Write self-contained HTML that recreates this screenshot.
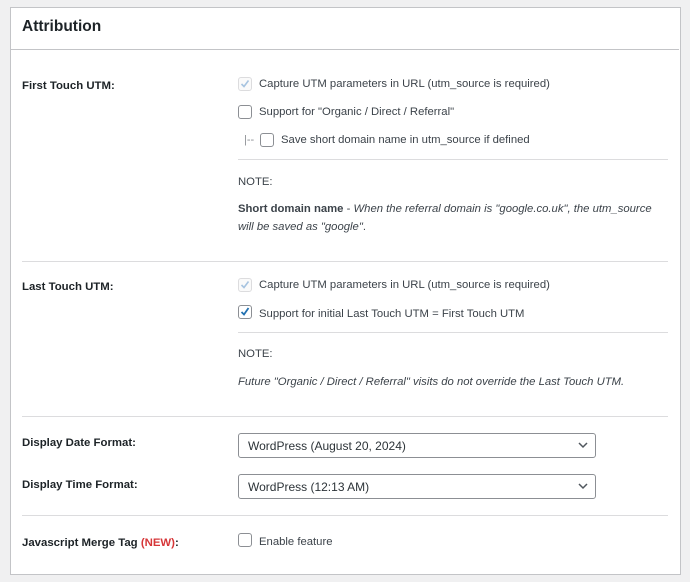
<!DOCTYPE html>
<html><head><style>
body{margin:0;width:690px;height:582px;background:#f0f0f1;font-family:"Liberation Sans",sans-serif;font-size:11.3px;color:#3c434a;position:relative;overflow:hidden}
.panel{position:absolute;left:10px;top:7px;width:669px;height:566px;background:#fff;border:1px solid #c3c4c7}
.a{position:absolute;white-space:nowrap;margin-top:1px}
.lbl{font-weight:bold;color:#1d2327;font-size:11.4px;margin-top:2px}
.cb{position:absolute;width:14px;height:14px;border:1px solid #8c8f94;border-radius:3px;background:#fff;box-sizing:border-box}
.cb.dis{border-color:#dcdcde;background:#fafafa}
.hr{position:absolute;height:1px;background:#dcdcde}
.sel{position:absolute;left:238px;width:358px;height:25px;border:1px solid #8c8f94;border-radius:3px;box-sizing:border-box;font-size:12px;color:#2c3338;padding:5px 0 0 9px}
.sel svg{position:absolute;right:7px;top:8px}
</style></head><body>
<div class="panel"></div>
<div style="position:absolute;left:11px;top:49px;width:668px;height:1px;background:#c3c4c7"></div>
<div style="position:absolute;left:22px;top:18px;font-size:15.5px;font-weight:bold;color:#1d2327">Attribution</div>

<div class="a lbl" style="left:22px;top:78px">First Touch UTM:</div>
<div class="cb dis" style="left:238px;top:77px"><svg width="12" height="12" viewBox="0 0 12 12" style="position:absolute;left:0;top:0"><path d="M2.5 6l2.5 2.5L9.5 2.5" fill="none" stroke="#a7c4e0" stroke-width="1.6"/></svg></div>
<div class="a" style="left:259px;top:77px">Capture UTM parameters in URL (utm_source is required)</div>
<div class="cb" style="left:238px;top:105px"></div>
<div class="a" style="left:259px;top:105px">Support for "Organic / Direct / Referral"</div>
<div class="a" style="left:244px;top:133px;color:#8c8f94;font-size:11px">|--</div>
<div class="cb" style="left:260px;top:133px"></div>
<div class="a" style="left:281px;top:133px">Save short domain name in utm_source if defined</div>
<div class="hr" style="left:238px;top:159px;width:430px"></div>
<div class="a" style="left:238px;top:175px">NOTE:</div>
<div class="a" style="left:238px;top:202px"><b style="color:#3c434a">Short domain name</b> - <i>When the referral domain is "google.co.uk", the utm_source</i></div>
<div class="a" style="left:238px;top:220px"><i>will be saved as "google"</i>.</div>
<div class="hr" style="left:22px;top:261px;width:646px"></div>

<div class="a lbl" style="left:22px;top:279px">Last Touch UTM:</div>
<div class="cb dis" style="left:238px;top:278px"><svg width="12" height="12" viewBox="0 0 12 12" style="position:absolute;left:0;top:0"><path d="M2.5 6l2.5 2.5L9.5 2.5" fill="none" stroke="#a7c4e0" stroke-width="1.6"/></svg></div>
<div class="a" style="left:259px;top:278px">Capture UTM parameters in URL (utm_source is required)</div>
<div class="cb" style="left:238px;top:305px"><svg width="12" height="12" viewBox="0 0 12 12" style="position:absolute;left:0;top:0"><path d="M2.5 6l2.5 2.5L9.5 2" fill="none" stroke="#2271b1" stroke-width="1.8"/></svg></div>
<div class="a" style="left:259px;top:307px">Support for initial Last Touch UTM = First Touch UTM</div>
<div class="hr" style="left:238px;top:332px;width:430px"></div>
<div class="a" style="left:238px;top:347px">NOTE:</div>
<div class="a" style="left:238px;top:375px"><i>Future "Organic / Direct / Referral" visits do not override the Last Touch UTM.</i></div>
<div class="hr" style="left:22px;top:416px;width:646px"></div>

<div class="a lbl" style="left:22px;top:435px">Display Date Format:</div>
<div class="sel" style="top:433px">WordPress (August 20, 2024)<svg width="10" height="7" viewBox="0 0 10 7"><path d="M1 1l4 4 4-4" fill="none" stroke="#50575e" stroke-width="1.5"/></svg></div>
<div class="a lbl" style="left:22px;top:477px">Display Time Format:</div>
<div class="sel" style="top:474px">WordPress (12:13 AM)<svg width="10" height="7" viewBox="0 0 10 7"><path d="M1 1l4 4 4-4" fill="none" stroke="#50575e" stroke-width="1.5"/></svg></div>
<div class="hr" style="left:22px;top:515px;width:646px"></div>

<div class="a lbl" style="left:22px;top:535px">Javascript Merge Tag <span style="color:#d63638">(NEW)</span>:</div>
<div class="cb" style="left:238px;top:533px"></div>
<div class="a" style="left:259px;top:535px">Enable feature</div>
</body></html>
